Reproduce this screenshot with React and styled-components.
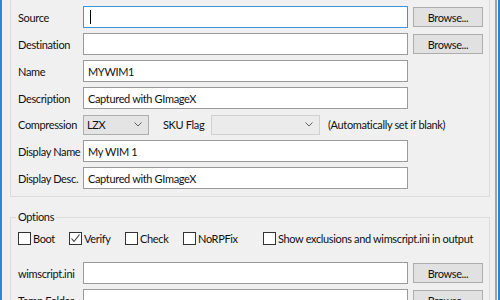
import styled, { createGlobalStyle } from 'styled-components'

const GlobalStyle = createGlobalStyle`
  html, body {
    margin: 0;
    padding: 0;
    background: #f0f0f0;
  }
  * {
    box-sizing: border-box;
  }
`;

function Chevron() {
  return (
    <svg width="8" height="5" viewBox="0 0 8 5">
      <polyline points="0.5,0.5 4,4 7.5,0.5" fill="none" stroke="#606060" strokeWidth="1" />
    </svg>
  );
}

function CheckBox({ label, checked }) {
  return (
    <CheckItem>
      <Box>
        {checked && (
          <svg width="11" height="11" viewBox="0 0 11 11">
            <polyline points="1.5,5.5 4,8.5 9.5,1.5" fill="none" stroke="#333" strokeWidth="1.1" />
          </svg>
        )}
      </Box>
      <span>{label}</span>
    </CheckItem>
  );
}

function App() {
  return (
    <>
      <GlobalStyle />
      <Window>
        <Body>
          <Group $cut>
            <Row>
              <Label>Source</Label>
              <TextBox $focused><Caret /></TextBox>
              <Button>Browse...</Button>
            </Row>
            <Row>
              <Label>Destination</Label>
              <TextBox />
              <Button>Browse...</Button>
            </Row>
            <Row>
              <Label>Name</Label>
              <TextBox>MYWIM1</TextBox>
            </Row>
            <Row>
              <Label>Description</Label>
              <TextBox>Captured with GImageX</TextBox>
            </Row>
            <CompressionRow>
              <Label>Compression</Label>
              <Select $width={66} $ml={5}>
                <span>LZX</span>
                <Chevron />
              </Select>
              <SkuLabel>SKU Flag</SkuLabel>
              <Select $width={109} $ml={0} $disabled>
                <span />
                <Chevron />
              </Select>
              <Hint>(Automatically set if blank)</Hint>
            </CompressionRow>
            <Row>
              <Label>Display Name</Label>
              <TextBox>My WIM 1</TextBox>
            </Row>
            <Row>
              <Label>Display Desc.</Label>
              <TextBox>Captured with GImageX</TextBox>
            </Row>
          </Group>

          <Options>
            <Legend>Options</Legend>
            <CheckRow>
              <CheckBox label="Boot" />
              <CheckBox label="Verify" checked />
              <CheckBox label="Check" />
              <CheckBox label="NoRPFix" />
              <CheckBox label="Show exclusions and wimscript.ini in output" />
            </CheckRow>
            <Row>
              <Label>wimscript.ini</Label>
              <TextBox />
              <Button>Browse...</Button>
            </Row>
            <Row>
              <Label>Temp Folder</Label>
              <TextBox />
              <Button>Browse...</Button>
            </Row>
          </Options>
        </Body>
      </Window>
    </>
  );
}

export default App;

const Window = styled.div`
  width: 500px;
  height: 300px;
  overflow: hidden;
  display: flex;
  background: #f0f0f0;
  border-left: 2px solid #2b86d8;
  border-right: 2px solid #2b86d8;
  font-family: Lato, "Noto Sans", sans-serif;
  font-size: 11px;
  letter-spacing: -0.35px;
  color: #111;
`;

const Body = styled.div`
  flex: 1;
  min-width: 0;
  display: flex;
  flex-direction: column;
  gap: 12px;
  padding: 0 5px 0 8px;
  margin-right: 1px;
  border-right: 2px solid #a3a3a3;
`;

const Group = styled.div`
  display: flex;
  flex-direction: column;
  gap: 5px;
  border: 1px solid #dcdcdc;
  border-top: ${(p) => (p.$cut ? 'none' : '1px solid #dcdcdc')};
  padding: 6px 6px 7px 7px;
`;

const Options = styled.fieldset`
  margin: 0;
  display: flex;
  flex-direction: column;
  gap: 5px;
  border: 1px solid #dcdcdc;
  padding: 5px 6px 7px 7px;
  min-width: 0;
`;

const Legend = styled.legend`
  padding: 0 2px;
  margin-left: -2px;
  line-height: 16px;
`;

const Row = styled.div`
  display: grid;
  grid-template-columns: 60px 325px 70px;
  column-gap: 5px;
  align-items: center;
  height: 22px;
  flex-shrink: 0;
`;

const CompressionRow = styled.div`
  display: flex;
  align-items: center;
  height: 21px;
  flex-shrink: 0;
`;

const Label = styled.span`
  white-space: nowrap;
  width: 60px;
  flex-shrink: 0;
`;

const SkuLabel = styled.span`
  margin-left: 14px;
  width: 48px;
  flex-shrink: 0;
  white-space: nowrap;
`;

const Hint = styled.span`
  margin-left: 8px;
  white-space: nowrap;
`;

const TextBox = styled.div`
  height: 22px;
  background: #fff;
  border: 1px solid ${(p) => (p.$focused ? '#3d95de' : '#9a9a9a')};
  display: flex;
  align-items: center;
  padding-left: 4px;
  white-space: nowrap;
`;

const Caret = styled.span`
  width: 1px;
  height: 14px;
  background: #000;
  margin-left: 2px;
`;

const Button = styled.div`
  height: 20px;
  background: #e1e1e1;
  border: 1px solid #adadad;
  display: flex;
  align-items: center;
  justify-content: center;
`;

const Select = styled.div`
  width: ${(p) => p.$width}px;
  margin-left: ${(p) => p.$ml}px;
  flex-shrink: 0;
  height: 20px;
  background: ${(p) => (p.$disabled ? '#ebebeb' : '#e4e4e4')};
  border: 1px solid ${(p) => (p.$disabled ? '#d0d0d0' : '#adadad')};
  display: flex;
  align-items: center;
  justify-content: space-between;
  padding: 0 6px 0 3px;
`;

const CheckRow = styled.div`
  display: grid;
  grid-template-columns: 51px 56px 58px 80px auto;
  align-items: center;
  height: 17px;
  margin-bottom: 10px;
`;

const CheckItem = styled.div`
  display: flex;
  align-items: center;
  gap: 2px;
  white-space: nowrap;
`;

const Box = styled.div`
  width: 13px;
  height: 13px;
  background: #fff;
  border: 1px solid #333;
  display: flex;
  align-items: center;
  justify-content: center;
`;
